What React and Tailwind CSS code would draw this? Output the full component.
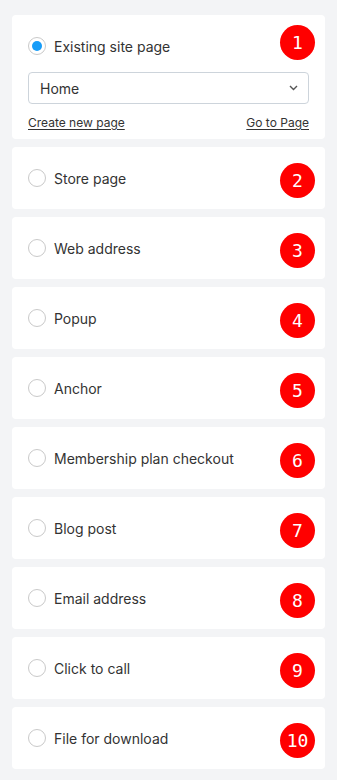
import React from "react";

const options = [
  "Store page",
  "Web address",
  "Popup",
  "Anchor",
  "Membership plan checkout",
  "Blog post",
  "Email address",
  "Click to call",
  "File for download",
];

function Badge({ n, className }) {
  return (
    <div
      className={`absolute right-[10px] w-[35px] h-[35px] rounded-full bg-[#ff0000] text-white flex items-center justify-center text-[18px] font-normal ${className}`}
      style={{ fontFamily: "'DejaVu Sans Mono', monospace" }}
    >
      {n}
    </div>
  );
}

function Radio({ checked }) {
  return (
    <span className="w-[18px] h-[18px] rounded-full border border-[#c9c9c9] bg-white flex items-center justify-center shrink-0">
      {checked && <span className="w-[10px] h-[10px] rounded-full bg-[#169cf8]" />}
    </span>
  );
}

export default function App() {
  return (
    <div
      className="min-h-screen bg-[#f3f4f6] px-[12px] pt-[15px] pb-[11px] flex flex-col gap-[8px] text-[#333333]"
      style={{ fontFamily: "Inter, 'Noto Sans', sans-serif" }}
    >
      <div className="relative bg-white rounded-[4px] px-[16px] pt-[22px] pb-[8px]">
        <div className="flex items-center gap-[8px] h-[18px]">
          <Radio checked />
          <span className="text-[14px]">Existing site page</span>
        </div>
        <div className="mt-[17px] h-[32px] border border-[#cdd4db] rounded-[4px] flex items-center justify-between pl-[11px] pr-[10px]">
          <span className="text-[14px]">Home</span>
          <svg width="9" height="6" viewBox="0 0 9 6" fill="none" stroke="#555" strokeWidth="1.4">
            <path d="M1 1l3.5 3.5L8 1" />
          </svg>
        </div>
        <div className="mt-[11px] flex justify-between text-[12px] leading-[16px]">
          <span className="underline underline-offset-2">Create new page</span>
          <span className="underline underline-offset-2">Go to Page</span>
        </div>
        <Badge n="1" className="top-[10px]" />
      </div>
      {options.map((label, i) => (
        <div key={label} className="relative bg-white rounded-[4px] h-[62px] px-[16px] flex items-center gap-[8px]">
          <Radio />
          <span className="text-[14px]">{label}</span>
          <Badge n={String(i + 2)} className="top-[16px]" />
        </div>
      ))}
    </div>
  );
}
